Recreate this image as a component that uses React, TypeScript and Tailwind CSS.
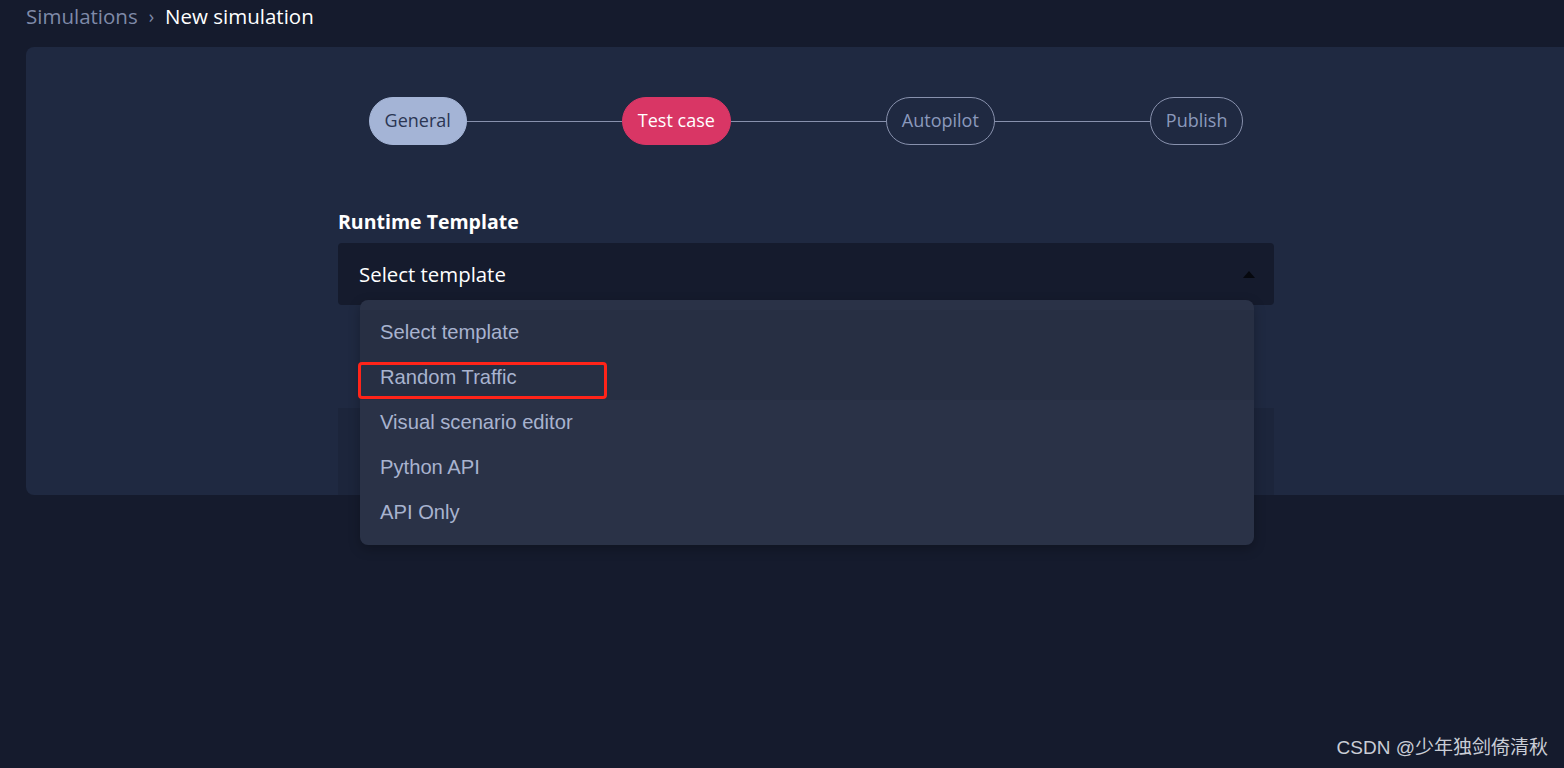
import React from "react";

const Pill = ({ label, variant }: { label: string; variant: "done" | "active" | "todo" }) => {
  const cls =
    variant === "done"
      ? "bg-[#a4b4d6] text-[#2b3653] border-[#a4b4d6]"
      : variant === "active"
      ? "bg-[#d93665] text-white border-[#d93665]"
      : "bg-transparent text-[#8b99bc] border-[#8891ad]";
  return (
    <div
      className={`h-[48px] px-[15px] rounded-full border flex items-center justify-center text-[18px] leading-[24px] pb-[2px] ${cls}`}
      style={{ fontFamily: '"Open Sans", sans-serif' }}
    >
      {label}
    </div>
  );
};

const Line = () => <div className="w-[155px] h-px bg-[#8891ad]" />;

export default function App() {
  const items = ["Select template", "Random Traffic", "Visual scenario editor", "Python API", "API Only"];
  return (
    <div
      className="w-[1564px] h-[768px] bg-[#151b2d] overflow-hidden relative"
      style={{ fontFamily: '"Open Sans", sans-serif' }}
    >
      <div className="h-[34px] pl-[26px] pb-[2px] flex items-center gap-[11px] text-[20.5px]">
        <span className="text-[#7f8aa8]">Simulations</span>
        <span className="text-[#7f8aa8] text-[18px]">›</span>
        <span className="text-white">New simulation</span>
      </div>
      <div className="ml-[26px] mt-[13px] w-[1560px] h-[448px] bg-[#1f2941] rounded-[8px] pt-[50px] flex flex-col items-center">
        <div className="flex items-center">
          <Pill label="General" variant="done" />
          <Line />
          <Pill label="Test case" variant="active" />
          <Line />
          <Pill label="Autopilot" variant="todo" />
          <Line />
          <Pill label="Publish" variant="todo" />
        </div>
        <div className="w-[936px] mt-[65px] relative flex-1 flex flex-col">
          <div className="text-white font-bold text-[19.5px] leading-[26px] -mt-px mb-px">Runtime Template</div>
          <div className="mt-[7px] h-[62px] bg-[#151b2d] rounded-[4px] flex items-center justify-between pl-[21px] pr-[19px]">
            <span className="text-white text-[20.4px]">Select template</span>
            <svg width="12" height="7" viewBox="0 0 12 7">
              <path d="M0 7 L6 0 L12 7 Z" fill="#06080e" />
            </svg>
          </div>
          <div className="mt-[103px] flex-1 bg-[#1c253b]" />
          <div
            className="absolute left-[22px] top-[90px] w-[894px] rounded-[8px] bg-[#2a3247] py-[10px] shadow-[0_4px_12px_rgba(0,0,0,0.25)] overflow-hidden"
            style={{ fontFamily: '"Liberation Sans", Arial, sans-serif' }}
          >
            {items.map((it, i) => (
              <div
                key={it}
                className={`h-[45px] flex items-center pl-[20px] text-[20.2px] text-[#a8b3cf] ${i < 2 ? "bg-[#272f43]" : ""}`}
              >
                {it}
              </div>
            ))}
          </div>
          <div className="absolute left-[20px] top-[152px] w-[249px] h-[37px] border-[3px] border-[#ff2419] rounded-[4px]" />
        </div>
      </div>
      <div
        className="absolute right-[16px] bottom-[6px] text-[19px] text-[#c9cdd6]"
        style={{ fontFamily: '"Liberation Sans", "Noto Sans CJK SC", sans-serif' }}
      >
        CSDN @少年独剑倚清秋
      </div>
    </div>
  );
}
